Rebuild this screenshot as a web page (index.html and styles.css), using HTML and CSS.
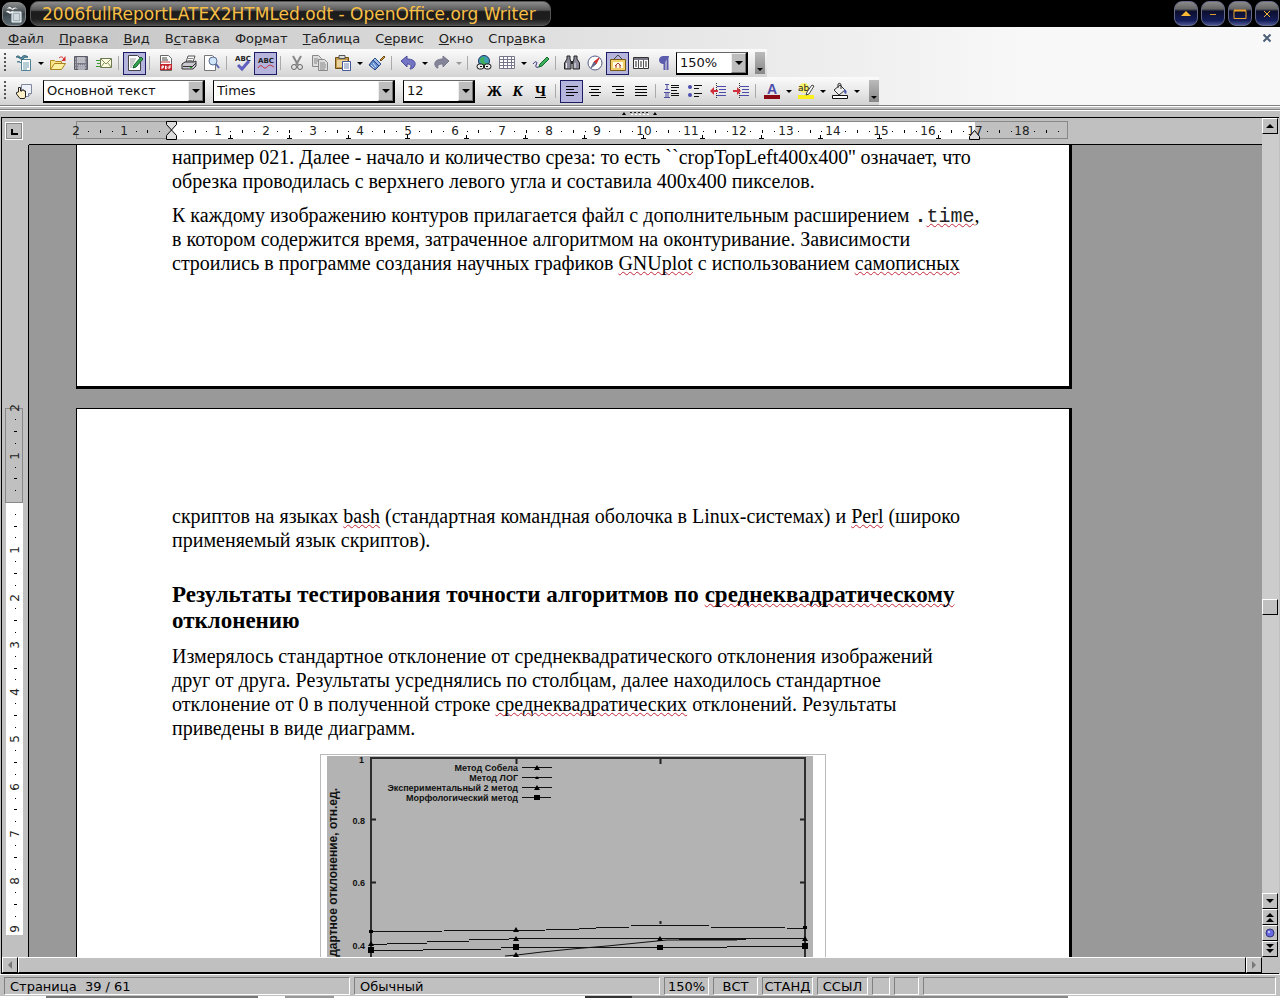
FILE: index.html
```html
<!DOCTYPE html>
<html lang="ru">
<head>
    <meta charset="UTF-8">
    <meta name="viewport" content="width=device-width, initial-scale=1.0">
    <title>2006fullReportLATEX2HTMLed.odt - OpenOffice.org Writer</title>
    <link rel="stylesheet" href="styles.css">
</head>
<body>
    <header class="titlebar">
        <button class="sysmenu" aria-label="Меню окна">
            <svg width="20" height="20" viewBox="0 0 20 20"><path d="M8 8h9v10H8z" fill="#9fb0b8" stroke="#fff"/><path d="M3 5c2-3 4-2 5 0 2-2 4-2 6 0-3-1-4 0-5 1-2-1-4-2-6-1zM2 8c2-2 3-1 4 0 1-1 3-1 4 0-2 0-3 1-4 2-1-1-2-2-4-2z" fill="#fff"/><path d="M10 11h5M10 13h5M10 15h5" stroke="#fff"/></svg>
        </button>
        <h1 class="title">2006fullReportLATEX2HTMLed.odt - OpenOffice.org Writer</h1>
        <div class="window-buttons">
            <button aria-label="Свернуть в заголовок"><svg width="14" height="14"><path d="M2 9l5-5 5 5z" fill="#f9b934"/></svg></button>
            <button aria-label="Свернуть"><svg width="14" height="14"><path d="M4 7.500h6" stroke="#d99a35"/></svg></button>
            <button aria-label="Развернуть"><svg width="14" height="14"><path d="M1 3.500h12v8H1z" fill="none" stroke="#e8a42f"/><path d="M1 3.500h12" stroke="#e8a42f" stroke-width="2"/></svg></button>
            <button aria-label="Закрыть"><svg width="14" height="14"><path d="M4 4l6 6M10 4l-6 6" stroke="#f9b934"/></svg></button>
        </div>
    </header>

    <div class="bars">
        <nav class="menubar">
            <a href="#"><u>Ф</u>айл</a>
            <a href="#"><u>П</u>равка</a>
            <a href="#"><u>В</u>ид</a>
            <a href="#">В<u>с</u>тавка</a>
            <a href="#">Фо<u>р</u>мат</a>
            <a href="#"><u>Т</u>аблица</a>
            <a href="#">С<u>е</u>рвис</a>
            <a href="#"><u>О</u>кно</a>
            <a href="#">Спр<u>а</u>вка</a>
            <button class="close-doc" aria-label="Закрыть документ"><svg width="10" height="10"><path d="M1.500 1.500l7 7M8.500 1.500l-7 7" stroke="#4d5f78" stroke-width="2"/></svg></button>
        </nav>

        <div class="toolbar">
            <span class="grip"></span>
            <button class="tool" aria-label="Создать"><svg width="16" height="16"><path d="M5.500 4.500h9v11h-9z" fill="#fff" stroke="#4f8296"/><path d="M7 8h6M7 10h6M7 12h6M7 14h4" stroke="#6f9cae"/><path d="M0 2c2-2 3-1 5 1 2-3 4-3 7-1-3 0-5 1-6 3C4 3 2 2 0 2zM1 7c2-1 3 0 4 1" fill="#5b91a6" stroke="#346578"/></svg></button>
            <button class="arrow" aria-label="Варианты создания"></button>
            <button class="tool" aria-label="Открыть"><svg width="16" height="16"><path d="M.5 14.500v-9h4l1 1h6v3" fill="#fbe38a" stroke="#b48a23"/><path d="M.5 14.500l4-6h11l-4 6z" fill="#fdf0a0" stroke="#a98420"/><path d="M9 3c2-2 4-1 5 1" fill="none" stroke="#d22f2f"/><path d="M15.500 1v5h-4z" fill="#d22f2f"/></svg></button>
            <button class="tool" aria-label="Сохранить"><svg width="16" height="16"><path d="M1.500 1.500h13v13h-13z" fill="#777786" stroke="#5b5b68"/><path d="M4 2h8v6H4z" fill="#b9b9c3"/><path d="M5 10h7v5H5z" fill="#a8a8b4"/><path d="M2 4h12M2 7h12M2 10h12M2 13h12" stroke="#ccc" stroke-dasharray="1 1"/></svg></button>
            <button class="tool" aria-label="Отправить по почте"><svg width="16" height="16"><path d="M4.500 3.500h11v9h-11z" fill="#fffde0" stroke="#6b7a50"/><path d="M5 4l5 5 5-5M5 12l3-4M15 12l-3-4" fill="none" stroke="#7d8d5c"/><path d="M0 5.500h4M1 8.500h3M0 11.500h4" stroke="#3d9c35"/></svg></button>
            <span class="sep"></span>
            <button class="tool pressed" aria-label="Правка файла"><svg width="16" height="16"><path d="M1.500.5h9l3 3v12h-12z" fill="#fff" stroke="#444"/><path d="M3 4h6M3 6h5M3 8h4M3 10h3M3 12h2" stroke="#999"/><path d="M6 13l1-3 7-8 2 2-7 8z" fill="#35a34c" stroke="#12612a"/></svg></button>
            <span class="sep"></span>
            <button class="tool" aria-label="Экспорт в PDF"><svg width="16" height="16"><path d="M2.500.5h8l3 3v12h-11z" fill="#fff" stroke="#666"/><path d="M4 3h5M4 5h6" stroke="#444"/><path d="M3 7h9" stroke="#c33"/><path d="M2 9h12v6H2z" fill="#c4242b"/><path d="M4 14v-3h1.500v1.500H4M7.500 11v3c2 0 2-3 0-3zM11 14v-3h2m-2 1.500h1.500" fill="none" stroke="#fff"/></svg></button>
            <button class="tool" aria-label="Печать"><svg width="16" height="16"><path d="M5 7l2-6h7l-2 6z" fill="#fff" stroke="#555"/><path d="M1 9l3-2h9l2-1v5l-3 3H1z" fill="#c9c9d0" stroke="#333"/><path d="M2 11.500h10M12 11l3-3" stroke="#333"/><path d="M7 3.500h5M6.500 5.500h5" stroke="#888"/><path d="M9 12.500h2" stroke="#2a2"/></svg></button>
            <button class="tool" aria-label="Предварительный просмотр"><svg width="16" height="16"><path d="M.5.5h8l3 3v12H.500z" fill="#fff" stroke="#777"/><circle cx="9" cy="6" r="4" fill="#cfe6fa" stroke="#5b6b95"/><path d="M12 9l3 4" stroke="#5b6bb0" stroke-width="2"/></svg></button>
            <span class="sep"></span>
            <button class="tool" aria-label="Проверка орфографии"><svg width="16" height="16"><text x="0" y="6" class="abc">ABC</text><path d="M3 10l4 4 7-8" fill="none" stroke="#5f5fc0" stroke-width="3"/></svg></button>
            <button class="tool pressed" aria-label="Автопроверка"><svg width="16" height="16"><text x="0" y="8" class="abc">ABC</text><path d="M0 13c2-3 3-3 5-1s3 1 5-1 4 0 6 1" fill="none" stroke="#c5222f"/></svg></button>
            <span class="sep"></span>
            <button class="tool" aria-label="Вырезать"><svg width="16" height="16"><path d="M4 1l5 9M12 1L7 10" stroke="#888" stroke-width="2"/><circle cx="5" cy="12" r="2.500" fill="none" stroke="#666"/><circle cx="11" cy="12" r="2.500" fill="none" stroke="#666"/></svg></button>
            <button class="tool" aria-label="Копировать"><svg width="16" height="16"><path d="M.5.5h6l3 3v8h-9z" fill="#ddd" stroke="#888"/><path d="M6.500 4.500h6l3 3v8h-9z" fill="#ddd" stroke="#888"/><path d="M2 4h4M2 6h4M2 8h3M8 8h5M8 10h6M8 12h6M8 14h5" stroke="#888"/></svg></button>
            <button class="tool" aria-label="Вставить"><svg width="16" height="16"><path d="M.5 2.500h13v11H.500z" fill="#c29a4b" stroke="#6e4e14"/><path d="M4 .5h6v3H4z" fill="#ddd" stroke="#555"/><path d="M2 5h10v7H2z" fill="#e9d39b"/><path d="M7.500 6.500h8v9h-8z" fill="#fff" stroke="#45579b"/><path d="M9 9h5M9 11h5M9 13h5" stroke="#7080b8"/></svg></button>
            <button class="arrow" aria-label="Варианты вставки"></button>
            <button class="tool" aria-label="Копировать формат"><svg width="16" height="16"><path d="M11 5l4-4 1 1-4 4z" fill="#d9a13b" stroke="#6f4d17"/><path d="M6 3l6 6-2 2-6-6z" fill="#9ab8ea" stroke="#31568f"/><path d="M4 5l6 6-4 4-6-5z" fill="#5f8bd0" stroke="#2a467c"/><path d="M2 10l3 3M4 8l3 4" stroke="#dce8fa"/></svg></button>
            <span class="sep"></span>
            <button class="tool" aria-label="Отменить"><svg width="16" height="16"><path d="M1 6l6-5v3c5 0 9 2 8 6-1 3-3 4-5 4 2-3 1-5-3-5v3z" fill="#7474c4" stroke="#4b4b9c"/></svg></button>
            <button class="arrow" aria-label="Список отмены"></button>
            <button class="tool" aria-label="Вернуть"><svg width="16" height="16"><path d="M15 6L9 1v3C4 4 0 6 1 10c1 3 2 3 3 3-1-3 1-4 5-4v3z" fill="#85859a" stroke="#77778c"/></svg></button>
            <button class="arrow dim" aria-label="Список возврата"></button>
            <span class="sep"></span>
            <button class="tool" aria-label="Гиперссылка"><svg width="16" height="16"><circle cx="8" cy="6" r="5.500" fill="#3d9fb0" stroke="#236"/><path d="M5 3c3-2 4 0 3 2s1 3 3 3-2 4-4 2-4-5-2-7z" fill="#3fae57"/><rect x="1" y="9" width="7" height="5" rx="2.500" fill="#eee" stroke="#111"/><rect x="8" y="9" width="7" height="5" rx="2.500" fill="#eee" stroke="#111"/><path d="M4 11.500h8" stroke="#111" stroke-dasharray="2 1"/></svg></button>
            <button class="tool" aria-label="Таблица"><svg width="16" height="16"><path d="M.5 1.500h15v12H.500zM.5 4.500h15M.5 7.500h15M.5 10.500h15M4.500 1.500v12M8.500 1.500v12M12.500 1.500v12" fill="#fff" stroke="#77778c"/></svg></button>
            <button class="arrow" aria-label="Размер таблицы"></button>
            <button class="tool" aria-label="Рисование"><svg width="16" height="16"><path d="M0 9c3-4 5-2 3 1-1 3 2 3 4 1" fill="none" stroke="#35357c"/><path d="M6 12l1-3 7-7 2 2-7 7z" fill="#3cb05a" stroke="#176a30"/></svg></button>
            <span class="sep"></span>
            <button class="tool" aria-label="Найти и заменить"><svg width="16" height="16"><path d="M3 1h3v3l1 3v7H.500V8L3 4zM10 1h3v3l2.500 4v6H9V7l1-3z" fill="#8c8c9c" stroke="#222"/><path d="M7 6h2v3H7z" fill="#222"/><path d="M2.500 8v5M11 8v5" stroke="#eee"/></svg></button>
            <button class="tool" aria-label="Навигатор"><svg width="16" height="16"><circle cx="8" cy="8" r="7" fill="#fff" stroke="#555b88"/><path d="M12 3L9 9 7 7z" fill="#d33" stroke="#c22"/><path d="M4 13l3-6 2 2z" fill="#668" stroke="#668"/></svg></button>
            <button class="tool pressed" aria-label="Галерея"><svg width="16" height="16"><path d="M4 4l4-4 4 4" fill="none" stroke="#444"/><path d="M.5 4.500h15v11H.500z" fill="#f1cf6a" stroke="#7a5a14"/><path d="M3 7h10v6H3z" fill="#fffbe0"/><path d="M5 11l3-3 3 3M6 10v3M10 10v3" fill="none" stroke="#a33"/></svg></button>
            <button class="tool" aria-label="Источники данных"><svg width="16" height="16"><path d="M.5 2.500h15v11H.500z" fill="#fff" stroke="#333"/><path d="M1 4h14" stroke="#778" stroke-width="2"/><path d="M5.500 5v9M10.500 5v9" stroke="#555"/><path d="M2 7h2M2 9h2M2 11h2M7 7h2M7 9h2M7 11h2M12 7h2M12 9h2M12 11h2" stroke="#222"/></svg></button>
            <button class="tool" aria-label="Непечатаемые символы"><svg width="16" height="16"><path d="M13 1.500H7a3.500 3.500 0 000 7h1" fill="#5c5cae" stroke="#5c5cae"/><path d="M8.500 1v14M11.500 1v14" stroke="#5c5cae" stroke-width="2"/></svg></button>
            <label class="combo combo-zoom">
                <select aria-label="Масштаб"><option>150%</option></select><span class="drop"></span>
            </label>
            <button class="more" aria-label="Ещё"></button>
        </div>

        <div class="toolbar">
            <span class="grip"></span>
            <button class="tool" aria-label="Стили"><svg width="16" height="16"><path d="M5.500 1.500h10v9l-3 3h-7z" fill="#eef1f8" stroke="#8088a0"/><path d="M12.500 13.500v-3h3" fill="#ccd" stroke="#8088a0"/><path d="M2.500 9V4.500h2V8h1.500v-1h2v1h1.500v6l-1 1.500H4L.5 11V9.500z" fill="#fff0c8" stroke="#222"/></svg></button>
            <label class="combo combo-style">
                <select aria-label="Стиль"><option>Основной текст</option></select><span class="drop"></span>
            </label>
            <label class="combo combo-font">
                <select aria-label="Шрифт"><option>Times</option></select><span class="drop"></span>
            </label>
            <label class="combo combo-size">
                <select aria-label="Размер"><option>12</option></select><span class="drop"></span>
            </label>
            <button class="tool letter bold">Ж</button>
            <button class="tool letter italic">К</button>
            <button class="tool letter under">Ч</button>
            <span class="sep"></span>
            <button class="tool pressed" aria-label="По левому краю"><svg width="16" height="16"><path d="M2 3.500h12M2 6.500h8M2 9.500h12M2 12.500h8" stroke="#000"/></svg></button>
            <button class="tool" aria-label="По центру"><svg width="16" height="16"><path d="M2 3.500h12M4 6.500h8M2 9.500h12M4 12.500h8" stroke="#000"/></svg></button>
            <button class="tool" aria-label="По правому краю"><svg width="16" height="16"><path d="M2 3.500h12M6 6.500h8M2 9.500h12M6 12.500h8" stroke="#000"/></svg></button>
            <button class="tool" aria-label="По ширине"><svg width="16" height="16"><path d="M2 3.500h12M2 6.500h12M2 9.500h12M2 12.500h12" stroke="#000"/></svg></button>
            <span class="sep"></span>
            <button class="tool" aria-label="Нумерация"><svg width="16" height="16"><path d="M1 1.500h4M3 2v4M1 6.500h4M0 9.500h6M0 14.500h6M2 10v4M4 10v4" stroke="#4c4ca0"/><path d="M7 2.500h8M7 4.500h8M7 7.500h6M7 10.500h8M7 12.500h8" stroke="#111"/></svg></button>
            <button class="tool" aria-label="Маркеры"><svg width="16" height="16"><circle cx="3" cy="4" r="2" fill="#4c4cb0"/><circle cx="3" cy="12" r="2" fill="#4c4cb0"/><path d="M7 2.500h8M7 5.500h5M7 10.500h8M7 13.500h5" stroke="#111"/></svg></button>
            <button class="tool" aria-label="Уменьшить отступ"><svg width="16" height="16"><path d="M7 3.500h9M9 6.500h7M9 9.500h7M7 12.500h9" stroke="#4c4ca8"/><path d="M6.500 0v16" stroke="#333" stroke-dasharray="1 1"/><path d="M0 8l4-4v3h4v2H4v3z" fill="#d0303c"/></svg></button>
            <button class="tool" aria-label="Увеличить отступ"><svg width="16" height="16"><path d="M7 3.500h9M9 6.500h7M9 9.500h7M7 12.500h9" stroke="#4c4ca8"/><path d="M6.500 0v16" stroke="#333" stroke-dasharray="1 1"/><path d="M8 8L4 4v3H0v2h4v3z" fill="#d0303c"/></svg></button>
            <span class="sep"></span>
            <button class="tool" aria-label="Цвет шрифта"><svg width="16" height="16"><text x="3" y="11" class="glyph">A</text><path d="M0 12h16v4H0z" fill="#8b0a14"/></svg></button>
            <button class="arrow" aria-label="Выбор цвета шрифта"></button>
            <button class="tool" aria-label="Выделение цветом"><svg width="16" height="16"><circle cx="6" cy="5" r="5" fill="#fbf46a"/><path d="M0 12h16v4H0z" fill="#fbee1f"/><text x="0" y="8" class="ab">ab</text><path d="M8 12l1-3 5-7 2 1-5 8z" fill="#fff" stroke="#444"/></svg></button>
            <button class="arrow" aria-label="Выбор цвета выделения"></button>
            <button class="tool" aria-label="Цвет фона"><svg width="16" height="16"><path d="M2 7l6-5 5 5-6 5z" fill="#eee" stroke="#333"/><path d="M6 5V1c1-1 3-1 3 1v4" fill="none" stroke="#333"/><path d="M12 6c3 1 3 3 2 5-2 0-2-3-2-5z" fill="#4c5cb0"/><path d="M.5 12.500h15v3H.500z" fill="#fff" stroke="#111"/></svg></button>
            <button class="arrow" aria-label="Выбор цвета фона"></button>
            <button class="more" aria-label="Ещё"></button>
        </div>
    </div>

    <div class="splitter"><svg width="36" height="5"><path d="M0 4l2-3 2 3zM31 4l2-3 2 3z" fill="#000"/><path d="M8 1.500h20" stroke="#222" stroke-dasharray="2 2"/><path d="M9 3.500h20" stroke="#fff" stroke-dasharray="2 2"/></svg></div>

    <main class="workspace">
        <div class="corner"><button class="tab-kind" aria-label="Тип табуляции"><svg width="16" height="16"><path d="M6 6v5h6" fill="none" stroke="#000" stroke-width="2"/></svg></button></div>
        <div class="hruler"><svg id="hruler"></svg></div>
        <div class="vscroll">
            <button aria-label="Вверх"><svg width="10" height="6"><path d="M1 5l4-4 4 4z"/></svg></button>
            <span class="space-above"></span>
            <button class="thumb" aria-label="Ползунок"></button>
            <span class="space-below"></span>
            <button aria-label="Вниз"><svg width="10" height="6"><path d="M1 1l4 4 4-4z"/></svg></button>
            <button aria-label="Предыдущая страница"><svg width="10" height="10"><path d="M1 5l4-4 4 4zM1 10l4-4 4 4z"/></svg></button>
            <button aria-label="Навигация"><svg width="10" height="10"><circle cx="5" cy="5" r="4" fill="#6a6ae0" stroke="#35357c"/><circle cx="4" cy="4" r="1" fill="#dcdcff"/></svg></button>
            <button aria-label="Следующая страница"><svg width="10" height="10"><path d="M1 0l4 4 4-4zM1 5l4 4 4-4z"/></svg></button>
        </div>
        <div class="vruler"><svg id="vruler"></svg></div>
        <div class="canvas">
            <article class="paper paper-end">
                <p>например 021. Далее - начало и количество среза: то есть ``cropTopLeft400x400'' означает, что<br>обрезка проводилась с верхнего левого угла и составила 400x400 пикселов.</p>
                <p>К каждому изображению контуров прилагается файл с дополнительным расширением <code><b>.</b><span class="typo">time</span></code>,<br>в котором содержится время, затраченное алгоритмом на оконтуривание. Зависимости<br>строились в программе создания научных графиков <span class="typo">GNUplot</span> с использованием <span class="typo">самописных</span></p>
            </article>
            <article class="paper paper-start">
                <p>скриптов на языках <span class="typo">bash</span> (стандартная командная оболочка в Linux-системах) и <span class="typo">Perl</span> (широко<br>применяемый язык скриптов).</p>
                <h2>Результаты тестирования точности алгоритмов по <span class="typo">среднеквадратическому</span><br>отклонению</h2>
                <p>Измерялось стандартное отклонение от среднеквадратического отклонения изображений<br>друг от друга. Результаты усреднялись по столбцам, далее находилось стандартное<br>отклонение от 0 в полученной строке <span class="typo">среднеквадратических</span> отклонений. Результаты<br>приведены в виде диаграмм.</p>
                <figure class="chart">
                    <svg width="486" height="380">
                        <rect width="486" height="380" fill="#b3b3b3"/>
                        <path d="M44 380V2h434v378" fill="none" stroke="#2e2e2e" stroke-width="2"/>
                        <path d="M44 63.500h5M44 126.500h5M473 63.500h5M473 126.500h5M189.500 3v5M333.500 3v5M333.500 165v3" stroke="#222" stroke-width="2"/>
                        <g class="chart-text">
                            <text x="37" y="7">1</text>
                            <text x="38" y="68">0.8</text>
                            <text x="38" y="130">0.6</text>
                            <text x="38" y="193">0.4</text>
                            <text x="191" y="15">Метод Собела</text>
                            <text x="191" y="25">Метод ЛОГ</text>
                            <text x="191" y="35">Экспериментальный 2 метод</text>
                            <text x="191" y="45">Морфологический метод</text>
                        </g>
                        <text class="chart-axis" transform="translate(10 32) rotate(-90)">Стандартное отклонение, отн.ед.</text>
                        <path d="M195 11.500h30M195 21.500h30M195 31.500h30M195 41.500h29" stroke="#111"/>
                        <path d="M207 14l3-5 3 5zM208 23l2-3 2 3zM207 34l3-5 3 5zM207 39h6v5h-6z"/>
                        <path d="M44 175.500h71M117 174.500h101M219 173.500h33M252 172.500h17M269 171.500h33M304 169.500h78M384 171.500h74M460 172.500h18" stroke="#111"/>
                        <path d="M44 188.500h16M60 187.500h40M100 185.500h42M142 183.500h40M182 182.500h296" stroke="#111"/>
                        <path d="M44 194.500h52M96 193.500h78M174 191.500h226M400 190.500h78" stroke="#111"/>
                        <path d="M178 200l12-1 25-3 30-3 35-3 30-3 30-3h70" fill="none" stroke="#111"/>
                        <path d="M352 183h67" stroke="#111" stroke-width="2"/>
                        <path d="M41 190l3-5 3 5zM41 191h6v6h-6zM186 176l3-5 3 5zM186 185l3-5 3 5zM186 188h6v6h-6zM186 201l3-5 3 5zM330 185l3-5 3 5zM330 189h6v5h-6zM475 185l3-5 3 5zM475 187h6v6h-6zM42 174h4v3h-4zM476 170h4v3h-4z"/>
                    </svg>
                </figure>
            </article>
        </div>
        <div class="hscroll">
            <button aria-label="Влево"><svg width="6" height="10"><path d="M5 1v8L1 5z" fill="#777"/></svg></button>
            <button class="hthumb" aria-label="Ползунок"></button>
            <button aria-label="Вправо"><svg width="6" height="10"><path d="M1 1v8l4-4z" fill="#777"/></svg></button>
        </div>
    </main>

    <footer class="statusbar">
        <span class="cell cell-page">Страница&nbsp; 39 / 61</span>
        <span class="cell cell-style">Обычный</span>
        <span class="cell cell-short">150%</span>
        <span class="cell cell-short">ВСТ</span>
        <span class="cell cell-mode">СТАНД</span>
        <span class="cell cell-mode">ССЫЛ</span>
        <span class="cell cell-flag"></span>
        <span class="cell cell-sign"></span>
        <span class="cell cell-rest"></span>
    </footer>
    <div class="below"></div>

    <script src="script.js"></script>
</body>
</html>
```
FILE: styles.css
```css
* { box-sizing: border-box; }
body {
    margin: 0;
    height: 100vh;
    display: flex;
    flex-direction: column;
    overflow: hidden;
    background-color: #c0c0c0;
    color: #000;
    font-family: "DejaVu Sans", sans-serif;
    font-size: 13px;
}
button { margin: 0; padding: 0; border: none; background: none; font: inherit; color: inherit; }
svg { display: block; flex: none; }

/* Title bar */
.titlebar { display: flex; align-items: center; gap: 4px; height: 27px; padding: 0 1px 0 2px; background-color: #000; flex: none; }
.sysmenu {
    display: flex; align-items: center; justify-content: center;
    width: 24px; height: 24px;
    border: 1px solid #888; border-radius: 8px;
    background: linear-gradient(#8a8a8a, #3a464c 50%, #5b6a72);
}
.title {
    margin: 0;
    padding: 0 14px 0 11px;
    height: 25px;
    line-height: 25px;
    border: 1px solid #555;
    border-radius: 8px;
    background: linear-gradient(#8c8c8c, #5a5a5a 35%, #1c1c1c 42%, #1e1e1e 75%, #484848);
    color: #f8bf45;
    font-size: 17px;
    font-weight: normal;
    white-space: nowrap;
}
.window-buttons { display: flex; gap: 3px; margin-left: auto; }
.window-buttons button {
    display: flex; align-items: center; justify-content: center;
    width: 24px; height: 25px;
    border: 1px solid #666b88; border-radius: 8px;
    background: linear-gradient(#8a8a8a, #666 30%, #0c0f2c 40%, #141c58 80%, #4a5590);
}

/* Menu and toolbars */
.bars { flex: none; background: linear-gradient(to right, #c3c3c3, #f8f8f8 80%); border-bottom: 1px solid #808080; }
.menubar { display: flex; align-items: center; gap: 15px; height: 22px; padding: 0 8px; }
.menubar a { color: #222; text-decoration: none; }
.close-doc { margin-left: auto; }
.toolbar {
    display: flex; align-items: center;
    width: fit-content; height: 28px;
    background: linear-gradient(#fbfbfb, #e9e9e9 50%, #d2d2d2);
}
.grip { width: 2px; height: 20px; margin: 0 6px 0 4px; background: repeating-linear-gradient(#555 0 2px, transparent 2px 4px); }
.tool { display: flex; align-items: center; justify-content: center; width: 23px; height: 23px; }
.tool svg { overflow: visible; }
.pressed { border: 1px solid #1c1c66; background-color: #b4b4dc; }
.arrow { width: 11px; height: 23px; display: flex; align-items: center; justify-content: center; }
.arrow::before, .drop::before, .more::before { content: ""; border: 3px solid transparent; border-top-color: #000; border-bottom: none; }
.dim::before { border-top-color: #999; }
.sep { width: 1px; height: 14px; margin: 0 4px 0 3px; background-color: #aaa; }
.more { width: 10px; height: 22px; margin-left: 7px; padding-bottom: 3px; display: flex; align-items: flex-end; justify-content: center; background: linear-gradient(#bbb, #888); }
.letter { font-family: "Liberation Serif", serif; font-size: 15px; font-weight: bold; }
.italic { font-style: italic; }
.under { text-decoration: underline; }
.abc { font: bold 7px "DejaVu Sans", sans-serif; fill: #222; }
.glyph { font: bold 14px "Liberation Sans", sans-serif; fill: #4c4ca8; }
.ab { font: 9px "DejaVu Sans", sans-serif; fill: #222; }
.combo { display: flex; height: 23px; border: 1px solid #000; border-top-color: #666; border-right-width: 2px; border-bottom-width: 2px; background-color: #fff; }
.combo select {
    flex: 1; min-width: 0;
    appearance: none;
    margin: 0; padding: 0 3px; border: none;
    background: none;
    font: inherit; color: #111;
}
.drop { display: flex; align-items: center; justify-content: center; width: 15px; border: 1px solid #777; border-top-color: #eee; border-left-color: #eee; background-color: #bdbdbd; }
.drop::before { border-width: 4px; border-bottom: none; }
.combo-zoom { width: 72px; margin-left: 1px; }
.combo-zoom + .more { margin-right: 2px; }
.combo-style { width: 162px; margin: 0 8px; }
.combo-font { width: 182px; margin-right: 8px; }
.combo-size { width: 72px; margin-right: 8px; }

.splitter {
    flex: none;
    display: flex; align-items: center; justify-content: center;
    height: 11px;
    padding-top: 3px;
    background: linear-gradient(#fff 0 1px, #c0c0c0 1px 3px, #808080 3px 4px, #fff 4px 5px, #c0c0c0 5px);
}

/* Work area */
.workspace {
    flex: 1; min-height: 0;
    display: grid;
    grid-template-columns: 27px 1fr 17px;
    grid-template-rows: 27px 1fr 16px;
    margin: 0 1px;
    border: 1px solid #000;
    border-right: none;
}
.corner { padding: 4px 3px; }
.tab-kind { border: 1px solid #fff; outline: 1px solid #888; outline-offset: -2px; }
.hruler { border-bottom: 1px solid #000; }
.hruler svg { width: 100%; height: 100%; }
.vruler { border-right: 1px solid #000; overflow: hidden; }
.vruler svg { width: 100%; height: 100%; }
.num { font-size: 12px; fill: #222; text-anchor: middle; }

.canvas { overflow: hidden; padding-left: 47px; background-color: #999; }
.paper {
    width: 996px;
    padding-left: 95px;
    border: 1px solid #000;
    border-width: 1px 3px 3px 1px;
    background-color: #fff;
    font-family: "Liberation Serif", serif;
    font-size: 20px;
    line-height: 24px;
    white-space: nowrap;
}
.paper-end { height: 244px; margin-bottom: 19px; border-top: none; }
.paper-start { height: 1400px; padding-top: 95px; }
.paper p { margin: 0 0 10px; }
.paper h2 { margin: 30px 0 10px; font-size: 23px; line-height: 26px; }
.paper code { font-family: "Liberation Mono", monospace; font-size: 20px; line-height: 0; color: #222; }
.typo { text-decoration: underline wavy #c02838 1px; text-decoration-skip-ink: none; text-underline-offset: 1px; }
.chart { width: 506px; margin: 14px 0 0 148px; padding: 1px 6px; border: 1px solid #bbb; }
.chart-text { font: bold 9px "Liberation Sans", sans-serif; text-anchor: end; fill: #111; }
.chart-axis { font: bold 12px "Liberation Sans", sans-serif; text-anchor: end; fill: #111; }

/* Scrollbars */
.vscroll { grid-row: 1 / 3; grid-column: 3; display: flex; flex-direction: column; background-color: #ccc; }
.vscroll button, .hscroll button {
    flex: none;
    display: flex; align-items: center; justify-content: center;
    width: 16px; height: 16px;
    border: 1px solid #fff;
    border-right-color: #000; border-bottom-color: #000;
    background-color: #c0c0c0;
}
.space-above { flex: 465; }
.space-below { flex: 278; }
.hscroll { grid-row: 3; grid-column: 1 / 3; display: flex; }
.hscroll .hthumb { flex: 1; }

/* Status bar */
.statusbar { flex: none; display: flex; align-items: center; gap: 4px; height: 22px; padding: 0 4px; border-top: 1px solid #fff; }
.cell { height: 18px; line-height: 17px; padding: 0 5px; border: 1px solid #808080; border-right-color: #fff; border-bottom-color: #fff; white-space: pre; }
.cell-page { width: 346px; }
.cell-style { width: 306px; }
.cell-short { width: 45px; text-align: center; padding: 0; }
.cell-mode { width: 51px; text-align: center; padding: 0; }
.cell-flag { width: 18px; }
.cell-sign { width: 25px; }
.cell-rest { flex: 1; }
.below { flex: none; height: 2px; background: linear-gradient(to right, #fff 46px, #777 46px 258px, #fff 258px 285px, #999 285px 334px, #fff 334px 585px, #333 585px 632px, #888 632px 1068px, #fff 1068px); }
```
FILE: script.js
```javascript
const SVG = 'http://www.w3.org/2000/svg';
const CM = 47.3; // one centimetre at 150%

function add(parent, tag, attrs, text) {
    const el = document.createElementNS(SVG, tag);
    for (const key in attrs) {
        el.setAttribute(key, attrs[key]);
    }
    if (text !== undefined) {
        el.textContent = text;
    }
    parent.appendChild(el);
    return el;
}

// Draws numbers, dots and half marks from one position to another, in quarters of a centimetre
function scale(group, first, last, y) {
    for (let q = first; q <= last; q++) {
        const x = Math.round(q * CM / 4);
        if (q === 0) continue;
        if (q % 4 === 0) {
            add(group, 'text', { x: x, y: y + 4, class: 'num' }, Math.abs(q / 4));
        } else if (q % 2 === 0) {
            add(group, 'path', { d: `M${x + 0.5} ${y - 1}v3`, stroke: '#000' });
        } else {
            add(group, 'rect', { x: x, y: y, width: 1, height: 1 });
        }
    }
}

const hruler = document.getElementById('hruler');
const h = add(hruler, 'g', { transform: 'translate(142 0)' });
add(h, 'rect', { x: -94.5, y: 3.5, width: 991, height: 17, fill: '#c0c0c0', stroke: '#888' });
add(h, 'rect', { x: 0, y: 4, width: 804, height: 17, fill: '#fff' });
scale(h, -8, 75, 13);
for (let tab = 59; tab < 800; tab += 59) {
    add(h, 'path', { d: `M${tab - 2} 20.500h5M${tab + 0.5} 17v4`, stroke: '#000' });
}
add(h, 'path', { d: 'M-4.500 3.500h10v3l-10 11v4h10v-4l-10-11z', fill: '#ddd', stroke: '#000' });
add(h, 'path', { d: 'M798.500 21.500v-3l5-6 5 6v3z', fill: '#ddd', stroke: '#000' });

const vruler = document.getElementById('vruler');
const v = add(vruler, 'g', { transform: 'translate(0 358) rotate(-90)' });
add(v, 'rect', { x: -432, y: 4, width: 432, height: 17, fill: '#fff' });
add(v, 'rect', { x: 0.5, y: 3.5, width: 94, height: 17, fill: '#c0c0c0', stroke: '#888' });
scale(v, -36, 8, 13);
```
